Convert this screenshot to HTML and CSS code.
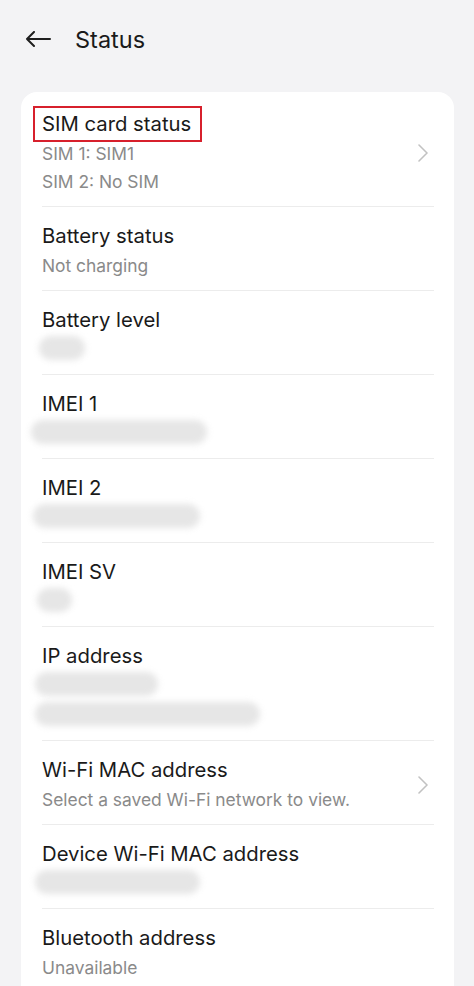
FILE: index.html
```html
<!DOCTYPE html>
<html lang="en">
<head>
  <meta charset="UTF-8">
  <meta name="viewport" content="width=device-width, initial-scale=1.0">
  <title>Status</title>
  <link rel="stylesheet" href="styles.css">
</head>
<body>

  <div class="topbar">
    <svg class="back" width="26" height="16" viewBox="0 0 26 16">
      <path d="M25 8H2M9 1L2 8l7 7" fill="none" stroke="#1f1f1f" stroke-width="2" stroke-linecap="round" stroke-linejoin="round"/>
    </svg>
    <h1 class="title">Status</h1>
  </div>

  <div class="card">
    <div class="row row-first">
      <div class="text">
        <div class="label"><span class="highlight">SIM card status</span></div>
        <div class="sub">SIM 1: SIM1</div>
        <div class="sub sub-next">SIM 2: No SIM</div>
      </div>
      <svg class="chevron" width="10" height="18" viewBox="0 0 10 18">
        <path d="M1 1l8 8-8 8" fill="none" stroke="#c2c2c2" stroke-width="1.6" stroke-linecap="round" stroke-linejoin="round"/>
      </svg>
    </div>

    <div class="row">
      <div class="text">
        <div class="label">Battery status</div>
        <div class="sub">Not charging</div>
      </div>
    </div>

    <div class="row">
      <div class="text">
        <div class="label">Battery level</div>
        <div class="sub"><div class="blob blob-battery"></div></div>
      </div>
    </div>

    <div class="row">
      <div class="text">
        <div class="label">IMEI 1</div>
        <div class="sub"><div class="blob blob-imei1"></div></div>
      </div>
    </div>

    <div class="row">
      <div class="text">
        <div class="label">IMEI 2</div>
        <div class="sub"><div class="blob blob-imei2"></div></div>
      </div>
    </div>

    <div class="row">
      <div class="text">
        <div class="label">IMEI SV</div>
        <div class="sub"><div class="blob blob-sv"></div></div>
      </div>
    </div>

    <div class="row">
      <div class="text">
        <div class="label">IP address</div>
        <div class="sub"><div class="blob blob-ip1"></div></div>
        <div class="sub sub-next"><div class="blob blob-ip2"></div></div>
      </div>
    </div>

    <div class="row">
      <div class="text">
        <div class="label">Wi-Fi MAC address</div>
        <div class="sub">Select a saved Wi-Fi network to view.</div>
      </div>
      <svg class="chevron" width="10" height="18" viewBox="0 0 10 18">
        <path d="M1 1l8 8-8 8" fill="none" stroke="#c2c2c2" stroke-width="1.6" stroke-linecap="round" stroke-linejoin="round"/>
      </svg>
    </div>

    <div class="row">
      <div class="text">
        <div class="label">Device Wi-Fi MAC address</div>
        <div class="sub"><div class="blob blob-mac"></div></div>
      </div>
    </div>

    <div class="row row-last">
      <div class="text">
        <div class="label">Bluetooth address</div>
        <div class="sub">Unavailable</div>
      </div>
    </div>
  </div>

</body>
</html>
```

FILE: styles.css
```css
body {
  margin: 0;
  padding: 0;
  background: #f3f3f5;
  font-family: Inter, Roboto, sans-serif;
  color: #1a1a1a;
  height: 986px;
  overflow: hidden;
}

.topbar {
  display: flex;
  align-items: center;
  height: 78px;
  padding-left: 25px;
  margin-bottom: 14px;
}

.back {
  display: block;
  margin-right: 24px;
}

.title {
  margin: 0;
  font-size: 23.5px;
  font-weight: 400;
}

.card {
  background: #fff;
  margin: 0 20px 0 21px;
  border-radius: 16px 16px 0 0;
  padding-bottom: 20px;
}

.row {
  display: flex;
  align-items: center;
  margin: 0 20px 0 21px;
  padding: 15px 6px 10px 0;
  border-bottom: 1px solid #ececec;
}

.row-first {
  padding-top: 18px;
}

.row-last {
  border-bottom: none;
}

.text {
  flex: 1;
}

.label {
  font-size: 20.3px;
  line-height: 28px;
  color: #1a1a1a;
}

.sub {
  font-size: 17.4px;
  line-height: 28px;
  height: 28px;
  color: #8a8a8a;
  margin-top: 2px;
}

.sub-next {
  margin-top: 0;
}

.highlight {
  display: inline-block;
  border: 2px solid #d7202c;
  padding: 2px 9px 2px 7px;
  margin: -4px -11px -4px -9px;
}

.chevron {
  display: block;
  flex-shrink: 0;
}

.blob {
  height: 24px;
  margin-top: 2px;
  border-radius: 12px;
  background: #e6e6e6;
  filter: blur(3px);
}

.blob-battery { width: 46px; margin-left: -3px; }
.blob-imei1 { width: 176px; margin-left: -11px; }
.blob-imei2 { width: 167px; margin-left: -9px; }
.blob-sv { width: 35px; margin-left: -5px; }
.blob-ip1 { width: 123px; margin-left: -7px; }
.blob-ip2 { width: 225px; margin-left: -7px; }
.blob-mac { width: 165px; margin-left: -7px; }
```
